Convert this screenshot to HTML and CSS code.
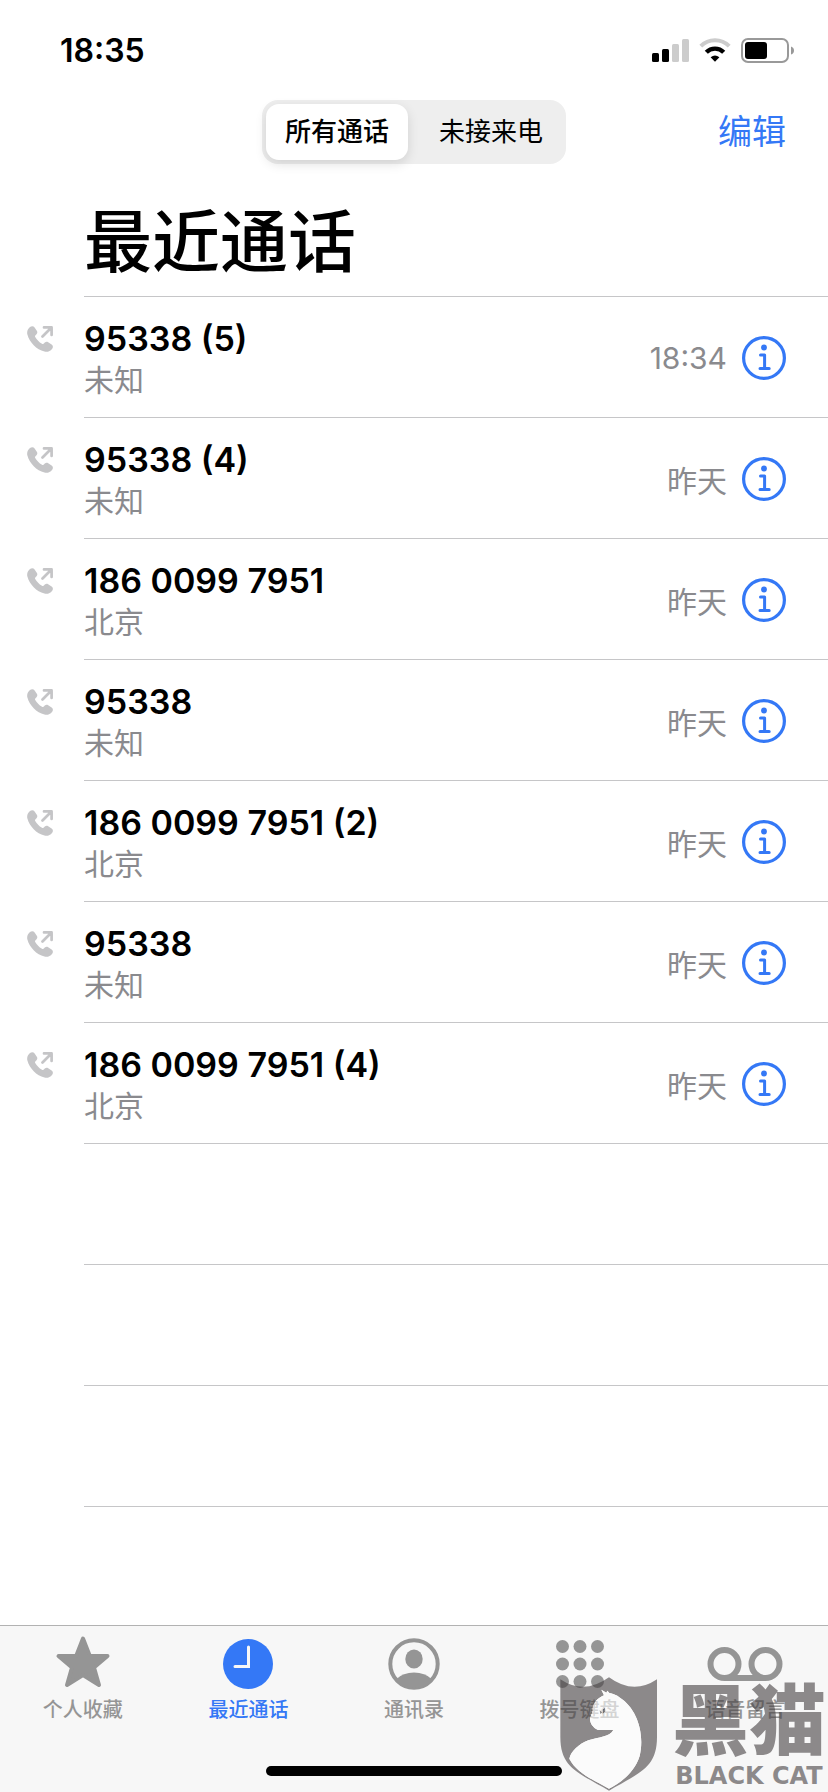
FILE: index.html
```
<!DOCTYPE html>
<html lang="zh-CN">
<head>
  <meta charset="UTF-8">
  <meta name="viewport" content="width=device-width, initial-scale=1">
  <title>最近通话</title>
  <link rel="stylesheet" href="styles.css">
</head>
<body>
  <!-- shared icons -->
  <svg class="sprite" aria-hidden="true">
    <symbol id="icon-outgoing" viewBox="0 0 26 26">
      <path d="M3 1C4.500-.2 6.500-.1 7.600 1.400L9.800 4.700C10.600 6 10.500 7.200 9.500 8.200L8.300 9.500C7.900 10 7.900 10.500 8.200 11C10 14 12 16 15 17.800C15.500 18.100 16 18.100 16.500 17.700L17.800 16.500C18.800 15.600 20 15.500 21.200 16.200L24.600 18.400C26.200 19.500 26.300 21.500 25 23C23.200 25.200 20.500 26.400 17.500 25.600C9.500 23.500 2.500 16.500.4 8.500C-.4 5.500.8 2.700 3 1Z" fill="currentColor"/>
      <path d="M15.500 10.500L24.200 1.800M17 1.400H24.600V9" fill="none" stroke="currentColor" stroke-width="2.700" stroke-linecap="round" stroke-linejoin="round"/>
    </symbol>
    <symbol id="icon-info" viewBox="0 0 44 44">
      <circle cx="22" cy="22" r="20.400" fill="none" stroke="currentColor" stroke-width="3.200"/>
      <circle cx="22" cy="11.500" r="2.900" fill="currentColor"/>
      <path d="M18.500 19H22.600V32.500M18 32.500H27.200" fill="none" stroke="currentColor" stroke-width="3" stroke-linecap="round" stroke-linejoin="round"/>
    </symbol>
  </svg>

  <header class="header">
    <div class="status-bar">
      <time class="status-time">18:35</time>
      <div class="status-icons">
        <svg width="37" height="23" viewBox="0 0 37 23" aria-hidden="true">
          <rect x="0" y="14" width="7" height="9" rx="1.500"/>
          <rect x="10" y="10" width="7" height="13" rx="1.500"/>
          <rect x="20" y="5" width="7" height="18" rx="1.500" fill="#ccc"/>
          <rect x="30" y="0" width="7" height="23" rx="1.500" fill="#ccc"/>
        </svg>
        <svg width="32" height="24" viewBox="0 0 32 24" aria-hidden="true">
          <path d="M1.800 8.200A20 20 0 0 1 30.200 8.200" fill="none" stroke="#ccc" stroke-width="4"/>
          <path d="M7.300 14.200A12.300 12.300 0 0 1 24.700 14.200" fill="none" stroke="#000" stroke-width="4.400"/>
          <path d="M11.600 19.300Q16 15.500 20.400 19.300L16 23.800Z"/>
        </svg>
        <svg width="53" height="25" viewBox="0 0 53 25" aria-hidden="true">
          <rect x="1" y="1" width="46" height="23" rx="6" fill="none" stroke="#999" stroke-width="2"/>
          <rect x="4" y="4" width="22" height="17" rx="3"/>
          <path d="M50 8.500Q53 9.500 53 12.500T50 16.500Z" fill="#999"/>
        </svg>
      </div>
    </div>

    <nav class="nav-bar">
      <div class="segmented">
        <button class="segment active" type="button">所有通话</button>
        <button class="segment" type="button">未接来电</button>
      </div>
      <button class="edit-btn" type="button">编辑</button>
    </nav>

    <h1 class="page-title">最近通话</h1>
  </header>

  <main>
    <ul class="call-list">
      <li class="call">
        <svg class="call-icon" aria-hidden="true"><use href="#icon-outgoing"/></svg>
        <div class="call-row">
          <div class="call-main">
            <div class="call-number">95338 (5)</div>
            <div class="call-place">未知</div>
          </div>
          <time class="call-time">18:34</time>
          <button class="info-btn" type="button" aria-label="详情"><svg><use href="#icon-info"/></svg></button>
        </div>
      </li>
      <li class="call">
        <svg class="call-icon" aria-hidden="true"><use href="#icon-outgoing"/></svg>
        <div class="call-row">
          <div class="call-main">
            <div class="call-number">95338 (4)</div>
            <div class="call-place">未知</div>
          </div>
          <time class="call-time">昨天</time>
          <button class="info-btn" type="button" aria-label="详情"><svg><use href="#icon-info"/></svg></button>
        </div>
      </li>
      <li class="call">
        <svg class="call-icon" aria-hidden="true"><use href="#icon-outgoing"/></svg>
        <div class="call-row">
          <div class="call-main">
            <div class="call-number">186 0099 7951</div>
            <div class="call-place">北京</div>
          </div>
          <time class="call-time">昨天</time>
          <button class="info-btn" type="button" aria-label="详情"><svg><use href="#icon-info"/></svg></button>
        </div>
      </li>
      <li class="call">
        <svg class="call-icon" aria-hidden="true"><use href="#icon-outgoing"/></svg>
        <div class="call-row">
          <div class="call-main">
            <div class="call-number">95338</div>
            <div class="call-place">未知</div>
          </div>
          <time class="call-time">昨天</time>
          <button class="info-btn" type="button" aria-label="详情"><svg><use href="#icon-info"/></svg></button>
        </div>
      </li>
      <li class="call">
        <svg class="call-icon" aria-hidden="true"><use href="#icon-outgoing"/></svg>
        <div class="call-row">
          <div class="call-main">
            <div class="call-number">186 0099 7951 (2)</div>
            <div class="call-place">北京</div>
          </div>
          <time class="call-time">昨天</time>
          <button class="info-btn" type="button" aria-label="详情"><svg><use href="#icon-info"/></svg></button>
        </div>
      </li>
      <li class="call">
        <svg class="call-icon" aria-hidden="true"><use href="#icon-outgoing"/></svg>
        <div class="call-row">
          <div class="call-main">
            <div class="call-number">95338</div>
            <div class="call-place">未知</div>
          </div>
          <time class="call-time">昨天</time>
          <button class="info-btn" type="button" aria-label="详情"><svg><use href="#icon-info"/></svg></button>
        </div>
      </li>
      <li class="call">
        <svg class="call-icon" aria-hidden="true"><use href="#icon-outgoing"/></svg>
        <div class="call-row">
          <div class="call-main">
            <div class="call-number">186 0099 7951 (4)</div>
            <div class="call-place">北京</div>
          </div>
          <time class="call-time">昨天</time>
          <button class="info-btn" type="button" aria-label="详情"><svg><use href="#icon-info"/></svg></button>
        </div>
      </li>
      <li class="call empty" aria-hidden="true"></li>
      <li class="call empty" aria-hidden="true"></li>
      <li class="call empty" aria-hidden="true"></li>
    </ul>
  </main>

  <footer class="footer">
    <nav class="tab-bar">
      <a class="tab" href="#favorites">
        <svg viewBox="0 0 60 60" aria-hidden="true">
          <path d="M30 4.500L36.800 22H54.500L41 33.500L46 51L30 41L14 51L19 33.500L5.500 22H23.200Z" fill="currentColor" stroke="currentColor" stroke-width="4" stroke-linejoin="round"/>
        </svg>
        <span>个人收藏</span>
      </a>
      <a class="tab active" href="#recents">
        <svg viewBox="0 0 60 60" aria-hidden="true">
          <circle cx="30" cy="30" r="25" fill="currentColor"/>
          <path d="M30.500 13V32.500H17" fill="none" stroke="#f7f7f7" stroke-width="3" stroke-linecap="round"/>
        </svg>
        <span>最近通话</span>
      </a>
      <a class="tab" href="#contacts">
        <svg viewBox="0 0 60 60" aria-hidden="true">
          <circle cx="30" cy="30" r="23.700" fill="none" stroke="currentColor" stroke-width="4"/>
          <ellipse cx="30" cy="25" rx="8.700" ry="9.500" fill="currentColor"/>
          <path d="M12.500 45Q19 38.500 30 38.500T47.500 45Q40 54 30 54T12.500 45Z" fill="currentColor"/>
        </svg>
        <span>通讯录</span>
      </a>
      <a class="tab" href="#keypad">
        <svg viewBox="0 0 60 60" aria-hidden="true">
          <g fill="currentColor">
            <circle cx="12.500" cy="12.500" r="6.500"/><circle cx="30" cy="12.500" r="6.500"/><circle cx="47.500" cy="12.500" r="6.500"/>
            <circle cx="12.500" cy="30" r="6.500"/><circle cx="30" cy="30" r="6.500"/><circle cx="47.500" cy="30" r="6.500"/>
            <circle cx="12.500" cy="47.500" r="6.500"/><circle cx="30" cy="47.500" r="6.500"/><circle cx="47.500" cy="47.500" r="6.500"/>
          </g>
        </svg>
        <span>拨号键盘</span>
      </a>
      <a class="tab" href="#voicemail">
        <svg class="wide" viewBox="0 0 80 60" aria-hidden="true">
          <path d="M19.500 44H60.500M33.500 30A14 14 0 1 0 19.500 44A14 14 0 0 0 33.500 30ZM74.500 30A14 14 0 1 0 60.500 44A14 14 0 0 0 74.500 30Z" fill="none" stroke="currentColor" stroke-width="6"/>
        </svg>
        <span>语音留言</span>
      </a>
    </nav>
    <div class="home-indicator"></div>

    <div class="watermark">
      <svg class="watermark-logo" viewBox="18 12 300 348" aria-hidden="true">
        <path fill-rule="evenodd" fill="#464143" d="M22 22Q93 70 168 16Q241 70 312 22V195C312 288 260 302 168 356C76 302 22 288 22 195ZM145 53L153 70C130 80 117 97 119 117L111 139C110 151 119 167 135 174H181C169 196 137 194 106 205C78 216 54 237 49 260C70 302 120 323 168 350C205 331 245 300 260 252C276 183 251 109 201 77C191 69 177 64 169 63L163 56L160 62Z"/>
        <path fill="#fff" d="M145 53L153 70C130 80 117 97 119 117L111 139C110 151 119 167 135 174H181C169 196 137 194 106 205C78 216 54 237 49 260C70 302 120 323 168 350C205 331 245 300 260 252C276 183 251 109 201 77C191 69 177 64 169 63L163 56L160 62Z"/>
        <path fill="#464143" d="M140 115L148 121L142 126ZM150 112L156 108L157 118L149 125Z"/>
      </svg>
      <div class="watermark-text">
        <span class="watermark-name">黑猫</span>
        <span class="watermark-latin">BLACK CAT</span>
      </div>
    </div>
  </footer>
</body>
</html>
```

FILE: styles.css
```
* {
  box-sizing: border-box;
}

body {
  margin: 0;
  min-height: 100vh;
  display: flex;
  flex-direction: column;
  background: #fff;
  color: #000;
  font-family: Inter, "Noto Sans CJK SC", sans-serif;
}

button {
  padding: 0;
  border: 0;
  background: none;
  color: inherit;
  font: inherit;
  cursor: pointer;
}

.sprite {
  position: absolute;
  width: 0;
  height: 0;
}

/* header */
.status-bar {
  display: flex;
  justify-content: space-between;
  align-items: center;
  height: 100px;
  padding: 0 34px 0 60px;
}

.status-time {
  font-size: 32px;
  font-weight: 600;
}

.status-icons {
  display: flex;
  align-items: center;
  gap: 10px;
}

.nav-bar {
  display: grid;
  grid-template-columns: 1fr auto 1fr;
  align-items: center;
  padding: 0 42px;
}

.segmented {
  grid-column: 2;
  display: flex;
  gap: 12px;
  padding: 4px;
  border-radius: 16px;
  background: #eee;
}

.segment {
  padding: 0 19px;
  border-radius: 13px;
  font-size: 26px;
  line-height: 56px;
}

.segment.active {
  background: #fff;
  font-weight: 500;
  box-shadow: 0 4px 12px rgba(0, 0, 0, 0.12);
}

.edit-btn {
  justify-self: end;
  color: #3478f6;
  font-size: 34px;
  line-height: 56px;
}

.page-title {
  margin: 0;
  padding: 38px 84px 14px;
  font-size: 68px;
  font-weight: 500;
  line-height: 80px;
}

/* calls */
.call-list {
  margin: 0;
  padding: 0;
  list-style: none;
}

.call-list::before {
  content: "";
  display: block;
  margin-left: 84px;
  border-top: 1px solid #c6c6c8;
}

.call {
  display: flex;
}

.call-icon {
  flex: none;
  width: 26px;
  height: 26px;
  margin: 29px 31px 0 27px;
  color: #c5c5c7;
}

.call-row {
  flex: 1;
  display: flex;
  align-items: center;
  padding: 17px 42px 16px 0;
  border-bottom: 1px solid #c6c6c8;
}

.call-main {
  flex: 1;
  padding-top: 4px;
}

.call-number {
  font-size: 34px;
  font-weight: 600;
  line-height: 41px;
}

.call-place {
  color: #8a8a8e;
  font-size: 30px;
  line-height: 42px;
}

.call-time {
  color: #8a8a8e;
  font-size: 30px;
}

.info-btn {
  width: 44px;
  height: 44px;
  margin-left: 15px;
  color: #3478f6;
}

.info-btn svg {
  display: block;
  width: 44px;
  height: 44px;
}

.empty {
  height: 121px;
  margin-left: 84px;
  border-bottom: 1px solid #c6c6c8;
}

/* tab bar */
.footer {
  position: relative;
  margin-top: auto;
  padding: 8px 0 16px;
  border-top: 1px solid #b2b2b2;
  background: #f7f7f7;
}

.tab-bar {
  display: flex;
}

.tab {
  flex: 1;
  display: flex;
  flex-direction: column;
  align-items: center;
  gap: 4px;
  color: #959595;
  font-size: 20px;
  font-weight: 500;
  line-height: 24px;
  text-decoration: none;
}

.tab svg {
  width: 60px;
  height: 60px;
}

.tab .wide {
  width: 80px;
}

.tab.active {
  color: #3478f6;
}

.home-indicator {
  width: 296px;
  height: 10px;
  margin: 44px auto 0;
  border-radius: 5px;
  background: #000;
}

/* watermark over the tab bar */
.watermark {
  position: absolute;
  right: 2px;
  bottom: 0;
  display: flex;
  align-items: flex-end;
  gap: 13px;
  opacity: 0.6;
  pointer-events: none;
}

.watermark-logo {
  width: 100px;
  height: 116px;
}

.watermark-text {
  display: flex;
  flex-direction: column;
  align-items: center;
  color: #464143;
}

.watermark-name {
  font-family: "Noto Sans CJK SC", sans-serif;
  font-size: 77px;
  font-weight: 900;
  line-height: 88px;
}

.watermark-latin {
  font-family: "DejaVu Sans", sans-serif;
  font-size: 24px;
  font-weight: 700;
  line-height: 32px;
}
```
